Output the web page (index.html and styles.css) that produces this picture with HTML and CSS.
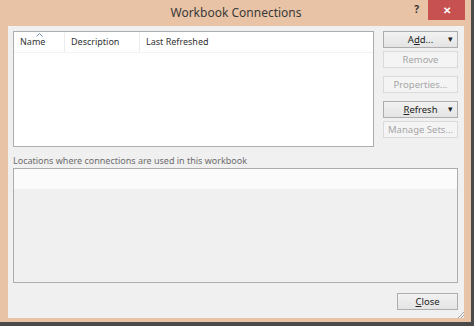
FILE: index.html
```html
<!DOCTYPE html>
<html lang="en">
<head>
    <meta charset="UTF-8">
    <title>Workbook Connections</title>
    <link rel="stylesheet" href="styles.css">
</head>
<body>
    <div class="window">
        <div class="titlebar">
            <span class="title">Workbook Connections</span>
            <span class="help">?</span>
            <span class="close-x">&#x2715;</span>
        </div>
        <div class="client">
            <div class="top-row">
                <div class="listview">
                    <div class="header">
                        <div class="col col-name">Name
                            <svg class="sort" width="7" height="4" viewBox="0 0 7 4"><polyline points="0.5,3.5 3.5,0.5 6.5,3.5" fill="none" stroke="#6f8bb0" stroke-width="1"/></svg>
                        </div>
                        <div class="col col-desc">Description</div>
                        <div class="col col-last">Last Refreshed</div>
                    </div>
                </div>
                <div class="buttons">
                    <button class="btn split"><span>A<u>d</u>d...</span><span class="arrow">&#x25be;</span></button>
                    <button class="btn" disabled>Remove</button>
                    <button class="btn gap-top" disabled>Properties...</button>
                    <button class="btn split gap-top"><span><u>R</u>efresh</span><span class="arrow">&#x25be;</span></button>
                    <button class="btn" disabled>Manage Sets...</button>
                </div>
            </div>
            <div class="locations-label">Locations where connections are used in this workbook</div>
            <div class="locations">
                <div class="locations-head"></div>
            </div>
            <div class="footer">
                <button class="btn close-btn"><u>C</u>lose</button>
            </div>
            <div class="grip"></div>
        </div>
    </div>
</body>
</html>
```

FILE: styles.css
```css
body {
    margin: 0;
    background-color: #4a4a4a;
    font-family: "Noto Sans", "Open Sans", sans-serif;
}

.window {
    width: 471px;
    height: 322px;
    background-color: #e9c3a5;
    box-sizing: border-box;
    padding: 0 7px 4px 8px;
    display: flex;
    flex-direction: column;
}

.titlebar {
    height: 26px;
    position: relative;
    text-align: center;
}

.title {
    display: inline-block;
    font-size: 12px;
    line-height: 24px;
    color: #3a3a3a;
}

.help {
    position: absolute;
    right: 45px;
    top: 2px;
    font-size: 10px;
    font-weight: bold;
    color: #333;
}

.close-x {
    position: absolute;
    right: -1px;
    top: 0;
    width: 37px;
    height: 20px;
    background-color: #c75050;
    color: #fff;
    font-size: 10px;
    font-weight: bold;
    line-height: 20px;
    text-align: center;
}

.client {
    flex: 1;
    position: relative;
    background-color: #f0f0f0;
    padding: 5px 6px 0 5px;
    box-sizing: border-box;
}

.top-row {
    display: flex;
    gap: 9px;
}

.listview {
    flex: 1;
    height: 116px;
    background-color: #fff;
    border: 1px solid #abadb3;
    box-sizing: border-box;
}

.header {
    display: flex;
    height: 20px;
    border-bottom: 1px solid #f2f2f2;
    font-size: 9px;
    color: #333;
}

.col {
    position: relative;
    line-height: 20px;
    padding-left: 6px;
    border-right: 1px solid #ececec;
    box-sizing: border-box;
    white-space: nowrap;
}

.col-name {
    width: 51px;
}

.col-desc {
    width: 75px;
}

.col-last {
    flex: 1;
    border-right: none;
}

.sort {
    position: absolute;
    left: 22px;
    top: 1px;
}

.buttons {
    width: 75px;
    display: flex;
    flex-direction: column;
    gap: 3px;
}

.btn {
    height: 17px;
    padding: 0;
    margin: 0;
    font-family: inherit;
    font-size: 9.5px;
    color: #222;
    background: linear-gradient(#f2f2f2, #e4e4e4);
    border: 1px solid #adadad;
    box-sizing: border-box;
    line-height: 14px;
}

.btn:disabled {
    color: #a6a6a6;
    background: #f4f4f4;
    border-color: #dadada;
}

.btn.split {
    position: relative;
}

.arrow {
    position: absolute;
    right: 4px;
    top: 0;
    font-size: 9px;
}

.gap-top {
    margin-top: 5px;
}

.locations-label {
    margin-top: 7px;
    font-size: 9px;
    color: #6d6d6d;
    line-height: 13px;
}

.locations {
    margin-top: 1px;
    height: 115px;
    border: 1px solid #abadb3;
    background-color: #f0f0f0;
    box-sizing: border-box;
}

.locations-head {
    height: 20px;
    background-color: #fbfbfb;
}

.footer {
    display: flex;
    justify-content: flex-end;
    margin-top: 10px;
}

.close-btn {
    width: 61px;
}

.grip {
    position: absolute;
    right: 0;
    bottom: 0;
    width: 6px;
    height: 6px;
    background: linear-gradient(135deg, transparent 45%, #a0a0a0 45%, #a0a0a0 55%, transparent 55%, transparent 70%, #a0a0a0 70%, #a0a0a0 80%, transparent 80%);
}
```
